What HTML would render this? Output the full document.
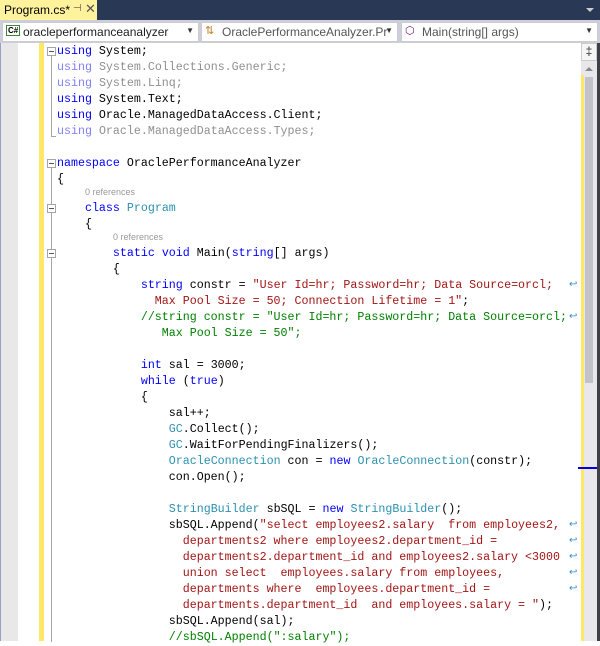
<!DOCTYPE html>
<html><head><meta charset="utf-8"><style>
*{margin:0;padding:0;box-sizing:border-box}
body{width:600px;height:641px;overflow:hidden;background:#fff;position:relative;font-family:"Liberation Sans",sans-serif}
.top{position:absolute;left:0;top:0;width:600px;height:20px;background:#293955}
.tab{position:absolute;left:0;top:0;width:97px;height:20px;background:#fff29d;font-size:12px;color:#000;padding:3px 0 0 4px}
.tab .pin{position:absolute;left:73px;top:3px;font-size:10px;color:#555}
.tab .x{position:absolute;left:85px;top:1px;font-size:13px;color:#555}
.tb{position:absolute;left:0;top:20px;width:600px;height:23px;background:#cccedb}
.dd{position:absolute;top:2px;height:20px;background:#fff;border:1px solid #ccc;font-size:12px;color:#1e1e1e;padding:2px 0 0 20px;white-space:nowrap;overflow:hidden}
.dd .ar{position:absolute;right:4px;top:3px;font-size:8px;color:#333}
.gut{position:absolute;left:0;top:43px;width:18px;height:598px;background:#e8e8e8;border-left:1px solid #98a0c8}
.yb{position:absolute;left:39px;top:43px;width:5px;height:598px;background:#ffe866}
.ol{position:absolute;left:51px;width:1px;background:#a5a5a5}
.box{position:absolute;left:47px;width:9px;height:9px;border:1px solid #a5a5a5;background:#fff}
.box:after{content:"";position:absolute;left:1px;top:3px;width:5px;height:1px;background:#555}
.code{position:absolute;left:57px;font-family:"Liberation Mono",monospace;font-size:11.65px;white-space:pre;color:#000;line-height:16px}
.k{color:#0000ff}.t{color:#2b91af}.s{color:#a31515}.c{color:#008000}.g{color:#8f8f8f}.gk{color:#8080ff}
.cl{position:absolute;font-size:9px;color:#999;font-family:"Liberation Sans",sans-serif}
.wr{position:absolute;left:569px;font-size:10px;color:#3c8ec8}
.sb{position:absolute;left:581px;top:43px;width:16px;height:598px;background:#e8e8ec}
.rb{position:absolute;left:597px;top:43px;width:3px;height:598px;background:#3f3f46}
</style></head><body>
<div class="top"><div class="tab">Program.cs*<span class="pin">⊣</span><span class="x">✕</span></div>
<div style="position:absolute;right:6px;top:8px;width:0;height:0;border-left:4px solid transparent;border-right:4px solid transparent;border-top:4px solid #ccc"></div></div>
<div class="tb">
<div class="dd" style="left:2px;width:197px"><span style="position:absolute;left:3px;top:2px;font-size:8px;border:1px solid #388a34;padding:0 1px;color:#000;font-weight:bold">C#</span>oracleperformanceanalyzer<span class="ar">▼</span></div>
<div class="dd" style="left:201px;width:197px;color:#555"><span style="position:absolute;left:3px;top:1px;color:#c27d1a;font-size:11px">⇅</span>OraclePerformanceAnalyzer.Pr<span class="ar">▼</span></div>
<div class="dd" style="left:401px;width:197px;color:#555"><span style="position:absolute;left:3px;top:1px;color:#68217a;font-size:11px">⬡</span>Main(string[] args)<span class="ar">▼</span></div>
</div>
<div class="gut"></div>
<div class="yb"></div>
<div class="ol" style="top:55px;height:82px"></div><div class="ol" style="top:136px;width:5px;height:1px"></div>
<div class="ol" style="top:167px;height:475px"></div>
<div class="box" style="top:47px"></div>
<div class="box" style="top:159px"></div>
<div class="box" style="top:204px"></div>
<div class="box" style="top:249px"></div>

<div class="code" style="top:44px"><span class="k">using</span> System;
<span class="gk">using</span> <span class="g">System.Collections.Generic;</span>
<span class="gk">using</span> <span class="g">System.Linq;</span>
<span class="k">using</span> System.Text;
<span class="k">using</span> Oracle.ManagedDataAccess.Client;
<span class="gk">using</span> <span class="g">Oracle.ManagedDataAccess.Types;</span>

<span class="k">namespace</span> OraclePerformanceAnalyzer
{</div>
<div class="cl" style="left:85px;top:187px">0 references</div>
<div class="code" style="top:201px">    <span class="k">class</span> <span class="t">Program</span>
    {</div>
<div class="cl" style="left:113px;top:232px">0 references</div>
<div class="code" style="top:246px">        <span class="k">static</span> <span class="k">void</span> Main(<span class="k">string</span>[] args)
        {
            <span class="k">string</span> constr = <span class="s">"User Id=hr; Password=hr; Data Source=orcl;</span>
<span class="s">              Max Pool Size = 50; Connection Lifetime = 1"</span>;
            <span class="c">//string constr = "User Id=hr; Password=hr; Data Source=orcl;</span>
<span class="c">               Max Pool Size = 50";</span>

            <span class="k">int</span> sal = 3000;
            <span class="k">while</span> (<span class="k">true</span>)
            {
                sal++;
                <span class="t">GC</span>.Collect();
                <span class="t">GC</span>.WaitForPendingFinalizers();
                <span class="t">OracleConnection</span> con = <span class="k">new</span> <span class="t">OracleConnection</span>(constr);
                con.Open();

                <span class="t">StringBuilder</span> sbSQL = <span class="k">new</span> <span class="t">StringBuilder</span>();
                sbSQL.Append(<span class="s">"select employees2.salary  from employees2,</span>
<span class="s">                  departments2 where employees2.department_id =</span>
<span class="s">                  departments2.department_id and employees2.salary &lt;3000</span>
<span class="s">                  union select  employees.salary from employees,</span>
<span class="s">                  departments where  employees.department_id =</span>
<span class="s">                  departments.department_id  and employees.salary = "</span>);
                sbSQL.Append(sal);
                <span class="c">//sbSQL.Append(":salary");</span></div>
<div class="wr" style="top:279px">↩</div>
<div class="wr" style="top:311px">↩</div>
<div class="wr" style="top:519px">↩</div>
<div class="wr" style="top:535px">↩</div>
<div class="wr" style="top:551px">↩</div>
<div class="wr" style="top:567px">↩</div>
<div class="wr" style="top:583px">↩</div>
<div class="sb">
<div style="position:absolute;left:0;top:0;width:16px;height:18px;background:#f5f5f5;border:1px solid #ccc;text-align:center;font-size:12px;line-height:15px;color:#333">‡</div>
<div style="position:absolute;left:4px;top:24px;width:0;height:0;border-left:4px solid transparent;border-right:4px solid transparent;border-bottom:4px solid #888"></div>
<div style="position:absolute;left:0;top:32px;width:3px;height:566px;background:#ffe866"></div>
<div style="position:absolute;left:4px;top:34px;width:8px;height:306px;background:#c2c3c9"></div>
<div style="position:absolute;left:-3px;top:424px;width:19px;height:2px;background:#0000e0"></div>
</div>
<div class="rb"></div>
</body></html>
